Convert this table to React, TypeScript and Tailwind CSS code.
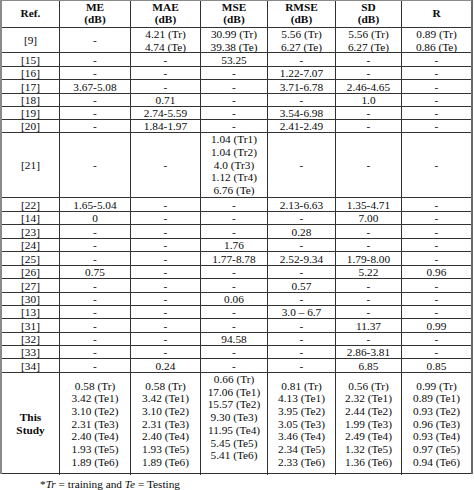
import React from "react";

type Row = { h: number; cells: string[][]; padMse?: boolean };

const D = ["-"];

const rows: Row[] = [
  { h: 25, cells: [["[9]"], D, ["4.21 (Tr)", "4.74 (Te)"], ["30.99 (Tr)", "39.38 (Te)"], ["5.56 (Tr)", "6.27 (Te)"], ["5.56 (Tr)", "6.27 (Te)"], ["0.89 (Tr)", "0.86 (Te)"]] },
  { h: 14, cells: [["[15]"], D, D, ["53.25"], D, D, D] },
  { h: 13, cells: [["[16]"], D, D, D, ["1.22-7.07"], D, D] },
  { h: 14, cells: [["[17]"], ["3.67-5.08"], D, D, ["3.71-6.78"], ["2.46-4.65"], D] },
  { h: 13, cells: [["[18]"], D, ["0.71"], D, D, ["1.0"], D] },
  { h: 13, cells: [["[19]"], D, ["2.74-5.59"], D, ["3.54-6.98"], D, D] },
  { h: 13, cells: [["[20]"], D, ["1.84-1.97"], D, ["2.41-2.49"], D, D] },
  { h: 65, cells: [["[21]"], D, D, ["1.04 (Tr1)", "1.04 (Tr2)", "4.0 (Tr3)", "1.12 (Tr4)", "6.76 (Te)"], D, D, D] },
  { h: 14, cells: [["[22]"], ["1.65-5.04"], D, D, ["2.13-6.63"], ["1.35-4.71"], D] },
  { h: 13, cells: [["[14]"], ["0"], D, D, D, ["7.00"], D] },
  { h: 14, cells: [["[23]"], D, D, D, ["0.28"], D, D] },
  { h: 13, cells: [["[24]"], D, D, ["1.76"], D, D, D] },
  { h: 14, cells: [["[25]"], D, D, ["1.77-8.78"], ["2.52-9.34"], ["1.79-8.00"], D] },
  { h: 13, cells: [["[26]"], ["0.75"], D, D, D, ["5.22"], ["0.96"]] },
  { h: 14, cells: [["[27]"], D, D, D, ["0.57"], D, D] },
  { h: 13, cells: [["[30]"], D, D, ["0.06"], D, D, D] },
  { h: 13, cells: [["[13]"], D, D, D, ["3.0 – 6.7"], D, D] },
  { h: 14, cells: [["[31]"], D, D, D, D, ["11.37"], ["0.99"]] },
  { h: 13, cells: [["[32]"], D, D, ["94.58"], D, D, D] },
  { h: 13, cells: [["[33]"], D, D, D, D, ["2.86-3.81"], D] },
  { h: 14, cells: [["[34]"], D, ["0.24"], D, D, ["6.85"], ["0.85"]] },
  {
    h: 101,
    padMse: true,
    cells: [
      ["This", "Study"],
      ["0.58 (Tr)", "3.42 (Te1)", "3.10 (Te2)", "2.31 (Te3)", "2.40 (Te4)", "1.93 (Te5)", "1.89 (Te6)"],
      ["0.58 (Tr)", "3.42 (Te1)", "3.10 (Te2)", "2.31 (Te3)", "2.40 (Te4)", "1.93 (Te5)", "1.89 (Te6)"],
      ["0.66 (Tr)", "17.06 (Te1)", "15.57 (Te2)", "9.30 (Te3)", "11.95 (Te4)", "5.45 (Te5)", "5.41 (Te6)"],
      ["0.81 (Tr)", "4.13 (Te1)", "3.95 (Te2)", "3.05 (Te3)", "3.46 (Te4)", "2.34 (Te5)", "2.33 (Te6)"],
      ["0.56 (Tr)", "2.32 (Te1)", "2.44 (Te2)", "1.99 (Te3)", "2.49 (Te4)", "1.32 (Te5)", "1.36 (Te6)"],
      ["0.99 (Tr)", "0.89 (Te1)", "0.93 (Te2)", "0.96 (Te3)", "0.93 (Te4)", "0.97 (Te5)", "0.94 (Te6)"],
    ],
  },
];

const header: string[][] = [["Ref."], ["ME", "(dB)"], ["MAE", "(dB)"], ["MSE", "(dB)"], ["RMSE", "(dB)"], ["SD", "(dB)"], ["R"]];

function Cell({ lines, last, bold, lh, extraBottom }: { lines: string[]; last: boolean; bold?: boolean; lh: string; extraBottom?: boolean }) {
  return (
    <div
      className={
        "flex flex-col items-center justify-center text-center whitespace-nowrap " +
        (last ? "" : "border-r border-[#333333] ") +
        (bold ? "font-bold " : "") +
        lh +
        (extraBottom ? " pb-[13px]" : "")
      }
    >
      {lines.map((l, i) => (
        <span key={i}>{l}</span>
      ))}
    </div>
  );
}

export default function App() {
  const cols = "grid grid-cols-[58px_71px_70px_67px_68px_66px_69px]";
  return (
    <div className="w-[474px] h-[490px] bg-white text-[#0a0a0a] text-[11.3px]" style={{ fontFamily: '"Liberation Serif", "Times New Roman", serif' }}>
      <div className="w-[473px] border-l-2 border-r-2 border-t border-l-[#8a8a8a] border-r-[#6a6a6a] border-t-[#8a8a8a]">
        <div className={cols + " h-[27px] border-b border-[#333333]"}>
          {header.map((c, i) => (
            <Cell key={i} lines={c} last={i === 6} bold lh="leading-[11.7px]" />
          ))}
        </div>
        {rows.map((r, ri) => (
          <div key={ri} className={cols + " border-b border-[#333333]"} style={{ height: r.h }}>
            {r.cells.map((c, i) => (
              <Cell
                key={i}
                lines={c}
                last={i === 6}
                bold={i === 0 && c[0] === "This"}
                lh={r.h === 25 ? "leading-[12.5px]" : r.h > 20 ? "leading-[12.7px]" : "leading-[12px]"}
                extraBottom={r.padMse && i === 3}
              />
            ))}
          </div>
        ))}
      </div>
      <div className="pl-[40px] pt-[4px] leading-[12px] whitespace-nowrap">
        *<i>Tr</i> = training and <i>Te</i> = Testing
      </div>
    </div>
  );
}
